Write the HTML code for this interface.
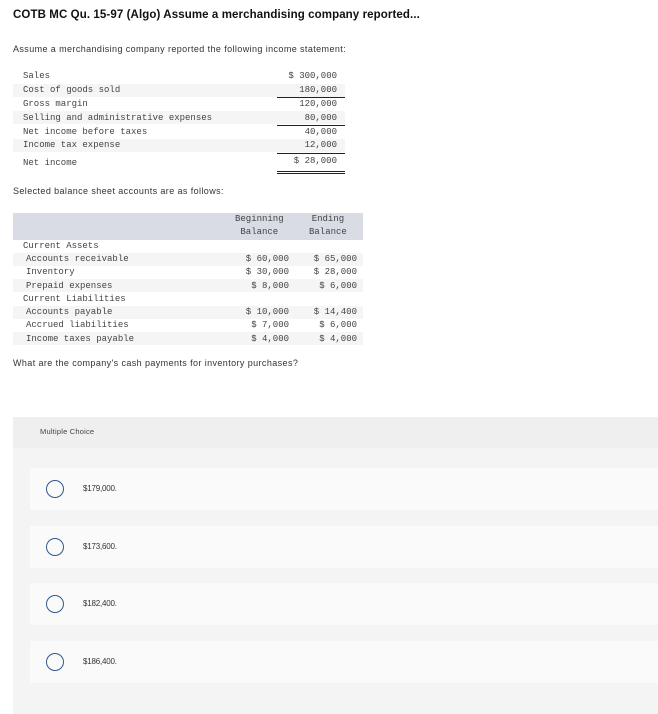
<!DOCTYPE html><html><head><style>
body{margin:0;width:658px;height:714px;background:#fff;position:relative;font-family:"Liberation Sans",sans-serif;color:#222;overflow:hidden}
.a{position:absolute;white-space:nowrap}
.m{font-family:"Liberation Mono","DejaVu Sans Mono",monospace;font-size:9px;color:#444}
.s{background:#f5f5f5}
.r{text-align:right}
.t{font-size:9px;letter-spacing:.4px;color:#333}
.ln{position:absolute;height:1px;background:#222}
.card{position:absolute;left:30px;width:628px;height:42px;background:#fafafa}
.c{position:absolute;left:16px;top:12px;width:16px;height:16px;border:1.3px solid #2e5a8a;border-radius:50%}
.o{position:absolute;left:53px;top:16px;font-size:8px;color:#333;letter-spacing:-.2px}
</style></head><body>
<div class="a" style="left:13px;top:9px;font-size:11.5px;font-weight:bold;color:#111;letter-spacing:.1px">COTB MC Qu. 15-97 (Algo) Assume a merchandising company reported...</div>
<div class="a t" style="left:13px;top:44px">Assume a merchandising company reported the following income statement:</div>

<div class="a s" style="left:13px;top:84px;width:332px;height:13px"></div>
<div class="a s" style="left:13px;top:111px;width:332px;height:13px"></div>
<div class="a s" style="left:13px;top:139px;width:332px;height:13px"></div>
<div class="a m" style="left:23px;top:71px">Sales</div>
<div class="a m" style="left:23px;top:85px">Cost of goods sold</div>
<div class="a m" style="left:23px;top:99px">Gross margin</div>
<div class="a m" style="left:23px;top:113px">Selling and administrative expenses</div>
<div class="a m" style="left:23px;top:127px">Net income before taxes</div>
<div class="a m" style="left:23px;top:140px">Income tax expense</div>
<div class="a m" style="left:23px;top:158px">Net income</div>
<div class="a m r" style="right:321px;top:71px">$ 300,000</div>
<div class="a m r" style="right:321px;top:85px">180,000</div>
<div class="a m r" style="right:321px;top:99px">120,000</div>
<div class="a m r" style="right:321px;top:113px">80,000</div>
<div class="a m r" style="right:321px;top:127px">40,000</div>
<div class="a m r" style="right:321px;top:140px">12,000</div>
<div class="a m r" style="right:321px;top:156px">$ 28,000</div>
<div class="ln" style="left:277px;top:97px;width:68px"></div>
<div class="ln" style="left:277px;top:125px;width:68px"></div>
<div class="ln" style="left:277px;top:153px;width:68px"></div>
<div class="ln" style="left:277px;top:171px;width:68px"></div>
<div class="ln" style="left:277px;top:173px;width:68px"></div>

<div class="a t" style="left:13px;top:186px">Selected balance sheet accounts are as follows:</div>
<div class="a" style="left:13px;top:213px;width:350px;height:27px;background:#d9dce4"></div>
<div class="a m" style="left:235px;top:213px;text-align:center;line-height:13px">Beginning<br>Balance</div>
<div class="a m" style="left:309px;top:213px;text-align:center;line-height:13px">Ending<br>Balance</div>
<div class="a s" style="left:13px;top:253px;width:350px;height:13px"></div>
<div class="a s" style="left:13px;top:279px;width:350px;height:13px"></div>
<div class="a s" style="left:13px;top:306px;width:350px;height:13px"></div>
<div class="a s" style="left:13px;top:332px;width:350px;height:13px"></div>
<div class="a m" style="left:23px;top:241px">Current Assets</div>
<div class="a m" style="left:26px;top:254px">Accounts receivable</div>
<div class="a m" style="left:26px;top:267px">Inventory</div>
<div class="a m" style="left:26px;top:281px">Prepaid expenses</div>
<div class="a m" style="left:23px;top:294px">Current Liabilities</div>
<div class="a m" style="left:26px;top:307px">Accounts payable</div>
<div class="a m" style="left:26px;top:320px">Accrued liabilities</div>
<div class="a m" style="left:26px;top:334px">Income taxes payable</div>
<div class="a m r" style="right:369px;top:254px">$ 60,000</div>
<div class="a m r" style="right:369px;top:267px">$ 30,000</div>
<div class="a m r" style="right:369px;top:281px">$ 8,000</div>
<div class="a m r" style="right:369px;top:307px">$ 10,000</div>
<div class="a m r" style="right:369px;top:320px">$ 7,000</div>
<div class="a m r" style="right:369px;top:334px">$ 4,000</div>
<div class="a m r" style="right:301px;top:254px">$ 65,000</div>
<div class="a m r" style="right:301px;top:267px">$ 28,000</div>
<div class="a m r" style="right:301px;top:281px">$ 6,000</div>
<div class="a m r" style="right:301px;top:307px">$ 14,400</div>
<div class="a m r" style="right:301px;top:320px">$ 6,000</div>
<div class="a m r" style="right:301px;top:334px">$ 4,000</div>
<div class="a t" style="left:13px;top:358px">What are the company's cash payments for inventory purchases?</div>

<div class="a" style="left:13px;top:417px;width:645px;height:297px;background:#f4f4f4"></div>
<div class="a" style="left:13px;top:417px;width:645px;height:31px;background:#efefef"></div>
<div class="a" style="left:40px;top:427px;font-size:7.5px;letter-spacing:.2px;color:#444">Multiple Choice</div>
<div class="card" style="top:468px"><div class="c"></div><div class="o">$179,000.</div></div>
<div class="card" style="top:526px"><div class="c"></div><div class="o">$173,600.</div></div>
<div class="card" style="top:583px"><div class="c"></div><div class="o">$182,400.</div></div>
<div class="card" style="top:641px"><div class="c"></div><div class="o">$186,400.</div></div>
</body></html>
